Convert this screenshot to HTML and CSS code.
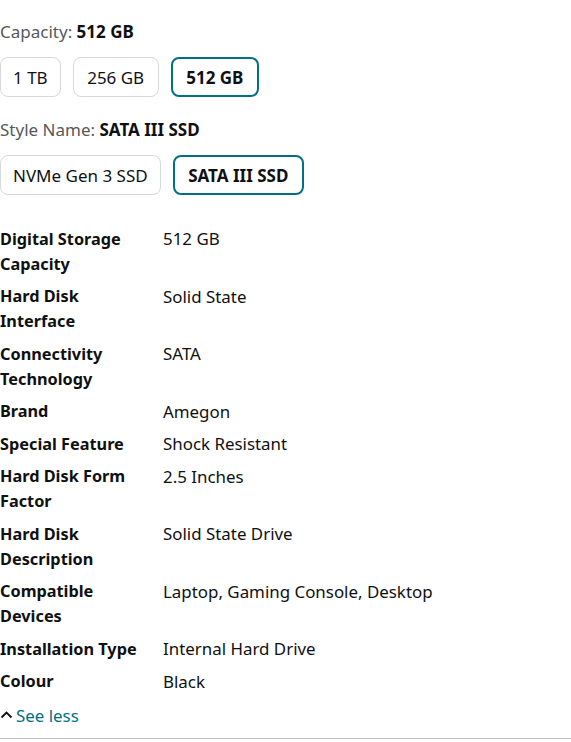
FILE: index.html
```html
<!DOCTYPE html>
<html lang="en">
<head>
<meta charset="utf-8">
<title>Product options</title>
<link rel="stylesheet" href="styles.css">
</head>
<body>
<div class="page">
  <section class="variation">
    <div class="var-label">Capacity: <span class="var-value">512 GB</span></div>
    <div class="swatches">
      <button class="swatch">1 TB</button>
      <button class="swatch wide">256 GB</button>
      <button class="swatch selected">512 GB</button>
    </div>
  </section>
  <section class="variation">
    <div class="var-label">Style Name: <span class="var-value">SATA III SSD</span></div>
    <div class="swatches">
      <button class="swatch">NVMe Gen 3 SSD</button>
      <button class="swatch selected">SATA III SSD</button>
    </div>
  </section>
  <table class="specs">
    <tr><th>Digital Storage Capacity</th><td>512 GB</td></tr>
    <tr><th>Hard Disk Interface</th><td>Solid State</td></tr>
    <tr><th>Connectivity Technology</th><td>SATA</td></tr>
    <tr><th>Brand</th><td>Amegon</td></tr>
    <tr><th>Special Feature</th><td>Shock Resistant</td></tr>
    <tr><th>Hard Disk Form Factor</th><td>2.5 Inches</td></tr>
    <tr><th>Hard Disk Description</th><td>Solid State Drive</td></tr>
    <tr><th>Compatible Devices</th><td>Laptop, Gaming Console, Desktop</td></tr>
    <tr><th>Installation Type</th><td>Internal Hard Drive</td></tr>
    <tr><th>Colour</th><td>Black</td></tr>
  </table>
  <a class="see-less" href="#"><svg class="chev" width="13" height="9" viewBox="0 0 13 9"><path d="M1.5 7.5 L6.5 2.5 L11.5 7.5" fill="none" stroke="#0f1111" stroke-width="1.8"/></svg>See less</a>
  <div class="divider"></div>
</div>
</body>
</html>
```
FILE: styles.css
```css
html, body {
  margin: 0;
  padding: 0;
  background: #fff;
}
body {
  font-family: "Noto Sans", "Open Sans", Arial, sans-serif;
  font-size: 17px;
  color: #0f1111;
}
.page {
  padding-top: 20px;
}
.variation + .variation {
  margin-top: 21px;
}
.var-label {
  color: #565959;
  line-height: 24px;
  font-size: 17px;
}
.var-value {
  color: #0f1111;
  font-weight: 700;
}
.swatches {
  display: flex;
  gap: 12px;
  margin-top: 13px;
}
.swatch {
  font: inherit;
  font-size: 17px;
  color: #0f1111;
  background: #fff;
  border: 1px solid #d5d9d9;
  border-radius: 8px;
  height: 40px;
  padding: 0 12px;
  cursor: pointer;
}
.swatch.wide {
  padding: 0 13.5px;
}
.swatch.selected {
  border: 2px solid #007185;
  font-weight: 700;
  padding: 0 13.5px;
}
.specs {
  border-collapse: collapse;
  margin-top: 27px;
}
.specs th {
  text-align: left;
  font-weight: 700;
  font-size: 16.3px;
  width: 140px;
  padding: 4.5px 23px 3px 0;
  line-height: 25px;
  vertical-align: top;
}
.specs td {
  font-size: 16.9px;
  padding: 4px 0 3.5px;
  line-height: 25px;
  vertical-align: top;
}
.see-less {
  display: flex;
  align-items: center;
  gap: 3px;
  color: #007185;
  text-decoration: none;
  font-size: 16.9px;
  line-height: 24px;
  margin-top: 7px;
}
.chev {
  margin-top: -4px;
}
.divider {
  border-top: 1px solid #bbbfbf;
  margin-top: 10px;
}
```
